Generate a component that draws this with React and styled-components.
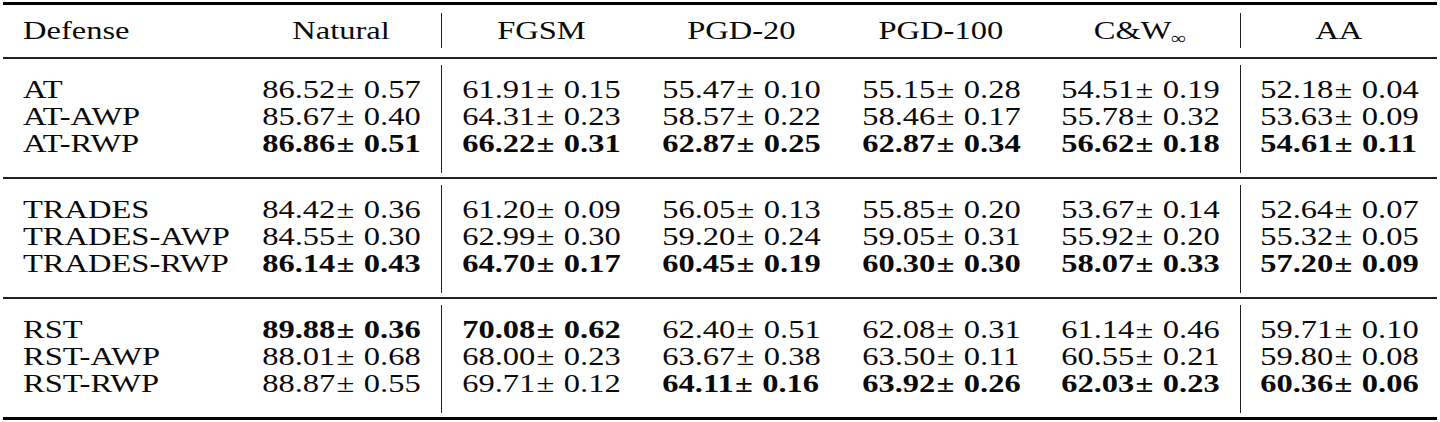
import React from "react";
import styled, { createGlobalStyle } from "styled-components";

// the source image is wider than tall, glyphs are stretched sideways
const STRETCH = 1.25;

const GlobalStyle = createGlobalStyle`
  html, body {
    margin: 0;
    padding: 0;
    background: #fff;
  }
  body {
    font-family: "Liberation Serif", "Times New Roman", serif;
    color: #0a0a0a;
  }
`;

const TableWrap = styled.div`
  width: 1434px;
  margin: 2px 3px 0;
  display: flex;
  flex-direction: column;
`;

const Rule = styled.div`
  height: ${({ heavy }) => (heavy ? "3px" : "2px")};
  background: ${({ heavy }) => (heavy ? "#000" : "#222")};
`;

const Section = styled.div`
  display: grid;
  grid-template-columns: 238px 200px 200px 200px 200px 199px 197px;
  padding: ${({ header }) => (header ? "8px 0 9px" : "6px 0 4px")};
`;

const Column = styled.div`
  display: flex;
  flex-direction: column;
  align-items: ${({ left }) => (left ? "flex-start" : "center")};
  padding: ${({ header }) => (header ? "4px 0" : "11px 0 16px")};
  padding-left: ${({ left }) => (left ? "20px" : "0")};
  border-left: ${({ divider }) => (divider ? "1.5px solid #222" : "none")};
`;

const Cell = styled.span`
  display: inline-block;
  height: 27px;
  line-height: 27px;
  font-size: 26px;
  font-weight: ${({ bold }) => (bold ? 700 : 400)};
  white-space: nowrap;
  transform: scaleX(${STRETCH});
  transform-origin: ${({ left }) => (left ? "left center" : "center center")};
`;

const PlusMinus = styled.span`
  margin: 0 1px 0 1px;
`;

const Sub = styled.sub`
  font-size: 17px;
  line-height: 0;
  vertical-align: -5px;
`;

const headers = ["Natural", "FGSM", "PGD-20", "PGD-100", "CW", "AA"];

const sections = [
  [
    ["AT", ["86.52", "0.57"], ["61.91", "0.15"], ["55.47", "0.10"], ["55.15", "0.28"], ["54.51", "0.19"], ["52.18", "0.04"]],
    ["AT-AWP", ["85.67", "0.40"], ["64.31", "0.23"], ["58.57", "0.22"], ["58.46", "0.17"], ["55.78", "0.32"], ["53.63", "0.09"]],
    ["AT-RWP", ["86.86", "0.51", 1], ["66.22", "0.31", 1], ["62.87", "0.25", 1], ["62.87", "0.34", 1], ["56.62", "0.18", 1], ["54.61", "0.11", 1]],
  ],
  [
    ["TRADES", ["84.42", "0.36"], ["61.20", "0.09"], ["56.05", "0.13"], ["55.85", "0.20"], ["53.67", "0.14"], ["52.64", "0.07"]],
    ["TRADES-AWP", ["84.55", "0.30"], ["62.99", "0.30"], ["59.20", "0.24"], ["59.05", "0.31"], ["55.92", "0.20"], ["55.32", "0.05"]],
    ["TRADES-RWP", ["86.14", "0.43", 1], ["64.70", "0.17", 1], ["60.45", "0.19", 1], ["60.30", "0.30", 1], ["58.07", "0.33", 1], ["57.20", "0.09", 1]],
  ],
  [
    ["RST", ["89.88", "0.36", 1], ["70.08", "0.62", 1], ["62.40", "0.51"], ["62.08", "0.31"], ["61.14", "0.46"], ["59.71", "0.10"]],
    ["RST-AWP", ["88.01", "0.68"], ["68.00", "0.23"], ["63.67", "0.38"], ["63.50", "0.11"], ["60.55", "0.21"], ["59.80", "0.08"]],
    ["RST-RWP", ["88.87", "0.55"], ["69.71", "0.12"], ["64.11", "0.16", 1], ["63.92", "0.26", 1], ["62.03", "0.23", 1], ["60.36", "0.06", 1]],
  ],
];

// columns 1 (FGSM) and 5 (AA) carry the vertical rules
const hasDivider = (i) => i === 1 || i === 5;

function Value({ mean, std, bold }) {
  return (
    <Cell bold={bold}>
      {mean}
      <PlusMinus>±</PlusMinus> {std}
    </Cell>
  );
}

export default function App() {
  return (
    <>
      <GlobalStyle />
      <TableWrap>
        <Rule heavy />
        <Section header>
          <Column header left>
            <Cell left>Defense</Cell>
          </Column>
          {headers.map((h, i) => (
            <Column header key={h} divider={hasDivider(i)}>
              <Cell>
                {h === "CW" ? (
                  <>
                    C&amp;W<Sub>∞</Sub>
                  </>
                ) : (
                  h
                )}
              </Cell>
            </Column>
          ))}
        </Section>
        {sections.map((rows, s) => (
          <React.Fragment key={s}>
            <Rule />
            <Section>
              <Column left>
                {rows.map((r) => (
                  <Cell left key={r[0]}>
                    {r[0]}
                  </Cell>
                ))}
              </Column>
              {headers.map((h, i) => (
                <Column key={h} divider={hasDivider(i)}>
                  {rows.map((r) => {
                    const [mean, std, bold] = r[i + 1];
                    return <Value key={r[0]} mean={mean} std={std} bold={!!bold} />;
                  })}
                </Column>
              ))}
            </Section>
          </React.Fragment>
        ))}
        <Rule heavy />
      </TableWrap>
    </>
  );
}
